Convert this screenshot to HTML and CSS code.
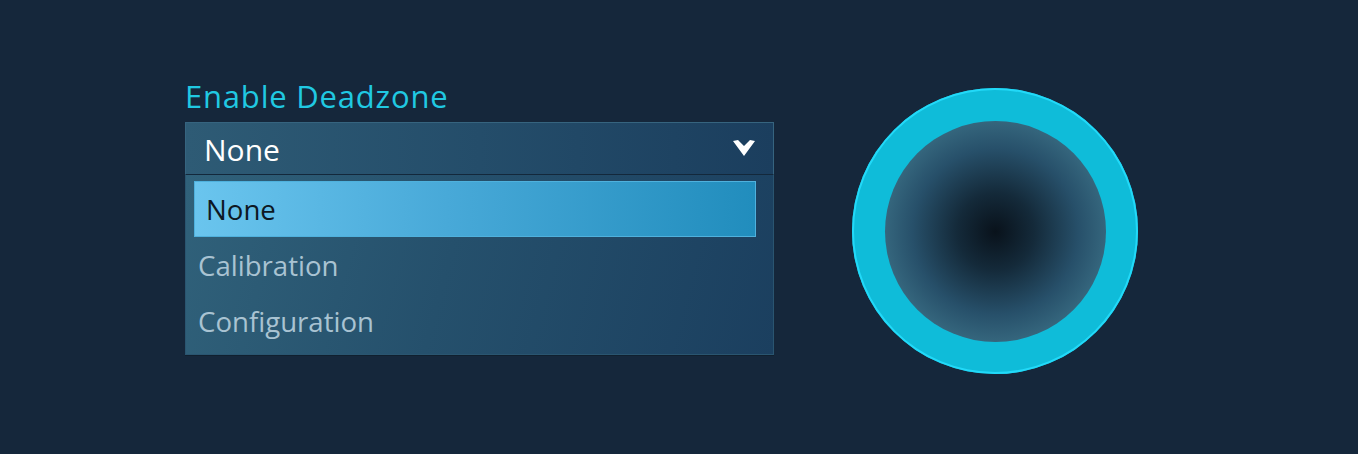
FILE: index.html
```html
<!DOCTYPE html>
<html lang="en">
<head>
<meta charset="utf-8">
<title>Deadzone</title>
<link rel="stylesheet" href="styles.css">
</head>
<body>
<main class="panel">
  <section class="field">
    <div class="field-label">Enable Deadzone</div>
    <div class="select">
      <div class="select-head">
        <span class="select-value">None</span>
        <svg class="chevron" width="22" height="18" viewBox="0 0 22 18" aria-hidden="true">
          <polygon points="0,2 5,1 11,7 17,1 22,2 11,17" fill="#ffffff"/>
        </svg>
      </div>
      <ul class="select-list">
        <li class="option option-active">None</li>
        <li class="option">Calibration</li>
        <li class="option">Configuration</li>
      </ul>
    </div>
  </section>
  <div class="stick">
    <div class="stick-well"></div>
  </div>
</main>
</body>
</html>
```

FILE: styles.css
```css
html, body {
  margin: 0;
  padding: 0;
}

body {
  background: #15273b;
  width: 1358px;
  height: 454px;
  overflow: hidden;
  font-family: "Open Sans", "Noto Sans", sans-serif;
}

.panel {
  display: flex;
  align-items: flex-start;
  gap: 78px;
  padding: 78px 0 0 185px;
}

.field {
  width: 589px;
  display: flex;
  flex-direction: column;
}

.field-label {
  color: #20c9e2;
  font-size: 31px;
  letter-spacing: 0.8px;
  line-height: 36px;
  margin-bottom: 8px;
}

.select {
  display: flex;
  flex-direction: column;
}

.select-head {
  height: 51px;
  display: flex;
  align-items: center;
  justify-content: space-between;
  padding: 0 18px 0 18px;
  border: 1px solid #36647f;
  border-bottom-color: #13283b;
  background: linear-gradient(90deg, #2e5b75 0%, #244d6a 50%, #1b3e5e 100%);
}

.select-value {
  color: #ffffff;
  font-size: 30px;
  line-height: 36px;
  margin-top: 3px;
}

.chevron {
  display: block;
  margin-top: -2px;
}

.select-list {
  list-style: none;
  margin: 0;
  padding: 6px 17px 5px 8px;
  border: 1px solid #2a5570;
  border-top: none;
  background: linear-gradient(105deg, #30617a 0%, #25506c 45%, #1b3f5f 100%);
  box-shadow: 0 1px 0 #10202f;
}

.option {
  height: 56px;
  display: flex;
  align-items: center;
  padding-left: 4px;
  color: #a9c3d2;
  font-size: 27.6px;
}

.option-active {
  padding-left: 11px;
  color: #0d1823;
  border: 1px solid #4fb1dd;
  height: 54px;
  background: linear-gradient(90deg, #6ac5ee 0%, #48a9d8 45%, #218dbd 100%);
}

.stick {
  margin-top: 10px;
  width: 286px;
  height: 286px;
  box-sizing: border-box;
  border-radius: 50%;
  background: #0fbcd9;
  box-shadow: inset 0 0 0 2px #22d9f8;
  display: flex;
  align-items: center;
  justify-content: center;
}

.stick-well {
  width: 221px;
  height: 221px;
  border-radius: 50%;
  background: radial-gradient(circle closest-side, #09121b 0%, #142a3a 35%, #27506a 75%, #35667d 100%);
}
```
